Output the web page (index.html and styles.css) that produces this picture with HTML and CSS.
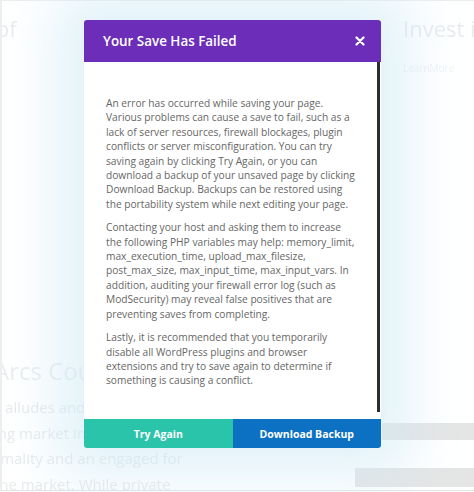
FILE: index.html
```html
<!DOCTYPE html>
<html lang="en">
<head>
<meta charset="utf-8">
<title>Your Save Has Failed</title>
<link rel="stylesheet" href="styles.css">
</head>
<body>
<div class="page">
  <div class="top-row">
    <div class="bg-left">
      <div class="bg-title">of</div>
    </div>
    <div class="bg-right">
      <div class="bg-title">Invest in</div>
      <div class="bg-link">LearnMore</div>
    </div>
  </div>
  <div class="lower">
    <div class="lower-text">
      <div class="bg-heading">Arcs Council</div>
      <p class="bg-line">s alludes and</p>
      <p class="bg-line">ing market in</p>
      <p class="bg-line">rmality and an engaged for</p>
      <p class="bg-line">the market. While private</p>
    </div>
    <div class="lower-bars">
      <div class="bar bar-a"></div>
      <div class="bar bar-b"></div>
    </div>
  </div>
</div>

<div class="modal">
  <div class="modal-header">
    <h2 class="modal-title">Your Save Has Failed</h2>
    <svg class="close" viewBox="0 0 10 10" width="10" height="10" aria-label="Close">
      <path d="M1.5 1.5 L8.5 8.5 M8.5 1.5 L1.5 8.5" stroke="#fff" stroke-width="2.2" stroke-linecap="round"/>
    </svg>
  </div>
  <div class="modal-body">
    <div class="modal-content">
      <p>An error has occurred while saving your page. Various problems can cause a save to fail, such as a lack of server resources, firewall blockages, plugin conflicts or server misconfiguration. You can try saving again by clicking Try Again, or you can download a backup of your unsaved page by clicking Download Backup. Backups can be restored using the portability system while next editing your page.</p>
      <p>Contacting your host and asking them to increase the following PHP variables may help: memory_limit, max_execution_time, upload_max_filesize, post_max_size, max_input_time, max_input_vars. In addition, auditing your firewall error log (such as ModSecurity) may reveal false positives that are preventing saves from completing.</p>
      <p>Lastly, it is recommended that you temporarily disable all WordPress plugins and browser extensions and try to save again to determine if something is causing a conflict.</p>
    </div>
    <div class="scrollbar"></div>
  </div>
  <div class="modal-buttons">
    <button class="btn btn-try">Try Again</button>
    <button class="btn btn-download">Download Backup</button>
  </div>
</div>
</body>
</html>
```

FILE: styles.css
```css
html, body {
  margin: 0;
  padding: 0;
}
body {
  width: 474px;
  height: 492px;
  overflow: hidden;
  background: #ffffff;
  font-family: "Open Sans", "Liberation Sans", sans-serif;
  position: relative;
}
.page {
  height: 491px;
  border-top: 1px solid #eceef0;
  border-bottom: 1px solid #e2e4e6;
  border-left: 2px solid #eeeeee;
  box-sizing: border-box;
  display: flex;
  flex-direction: column;
  justify-content: space-between;
  overflow: hidden;
  filter: blur(0.7px);
}
.top-row {
  display: flex;
  justify-content: space-between;
  padding-top: 12px;
}
.bg-left {
  margin-left: -6px;
}
.bg-title {
  font-size: 22px;
  color: #e9ecee;
  line-height: 30px;
  white-space: nowrap;
}
.bg-right {
  width: 71px;
  overflow: hidden;
}
.bg-link {
  margin-top: 18px;
  font-size: 10px;
  color: #eff1f3;
  white-space: nowrap;
}
.lower {
  display: flex;
  justify-content: space-between;
  align-items: flex-end;
}
.lower-text {
  margin-left: -8px;
  margin-bottom: -7px;
}
.bg-heading {
  font-size: 24px;
  color: #ebedef;
  line-height: 30px;
  white-space: nowrap;
  margin-bottom: 9px;
}
.bg-line {
  margin: 0;
  font-size: 15px;
  line-height: 25.5px;
  color: #e8eaec;
  white-space: nowrap;
}
.lower-bars {
  display: flex;
  flex-direction: column;
  align-items: flex-end;
  gap: 28px;
  padding-bottom: 3px;
}
.bar {
  background: #e5e5e5;
}
.bar-a { width: 92px; height: 17px; }
.bar-b { width: 119px; height: 19px; }

.modal {
  position: absolute;
  left: 84px;
  top: 20px;
  width: 297px;
  border-radius: 3px;
  overflow: hidden;
  box-shadow: 0 0 55px 28px rgba(205, 234, 245, 0.6);
}
.modal-header {
  background: #6c2eb9;
  height: 42px;
  display: flex;
  align-items: center;
  justify-content: space-between;
  padding: 0 16px 0 19px;
}
.modal-title {
  margin: 0;
  color: #ffffff;
  font-size: 13.4px;
  font-weight: 600;
}
.close {
  display: block;
}
.modal-body {
  background: #ffffff;
  display: flex;
  height: 357px;
}
.modal-content {
  flex: 1;
  padding: 34px 21px 0 22px;
}
.modal-content p {
  margin: 0 0 9px;
  font-size: 10.2px;
  line-height: 14.4px;
  color: #666666;
}
.scrollbar {
  width: 3px;
  margin: 0 1px 7px 0;
  background: #2d2d2d;
}
.modal-buttons {
  display: flex;
  height: 29px;
}
.btn {
  flex: 1;
  border: none;
  margin: 0;
  font-family: "Open Sans", "Liberation Sans", sans-serif;
  font-size: 10.5px;
  font-weight: 700;
  color: #ffffff;
  cursor: pointer;
}
.btn-try { background: #29c4a9; }
.btn-download { background: #0c71c3; }
```
